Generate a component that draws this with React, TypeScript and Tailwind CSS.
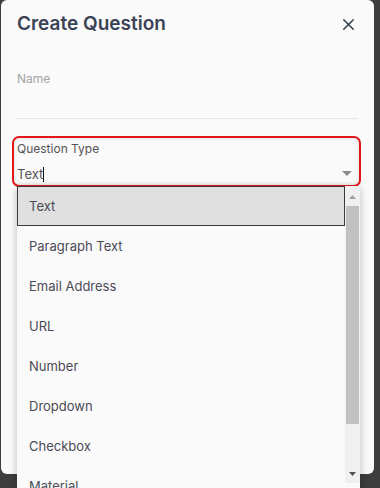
import { X } from "lucide-react"

const options = ["Text", "Paragraph Text", "Email Address", "URL", "Number", "Dropdown", "Checkbox", "Material"]

export default function App() {
  return (
    <div className="relative w-[380px] h-[488px] overflow-hidden bg-[#3d3d3d] font-['Inter','Noto_Sans',sans-serif]">
      {/* modal */}
      <div className="ml-[1px] w-[373px] h-[474px] rounded-[6px] bg-[#fafafa] px-4 pt-[11px]">
        <div className="flex items-center justify-between">
          <h2 className="text-[19px] font-semibold text-[#3a4356] leading-[26px]">Create Question</h2>
          <X className="w-[19px] h-[19px] text-[#3a4356]" strokeWidth={2} />
        </div>

        <div className="mt-[34px] border-b border-[#e6e6e6] pb-[31px]">
          <label className="block text-[12px] leading-[16px] text-[#a3a3a3]">Name</label>
        </div>

        <div className="mt-[17px] -ml-[5px] w-[349px] h-[51px] rounded-[7px] border-2 border-[#e3161b] px-[3px] pt-[3px] shadow-[inset_0_0_4px_rgba(0,0,0,0.12)]">
          <div className="text-[12px] leading-[16px] text-[#555]">Question Type</div>
          <div className="mt-[9px] flex items-center justify-between">
            <span className="text-[13px] leading-[16px] text-[#555] flex items-center">
              Text<span className="inline-block w-[1px] h-[15px] bg-[#111]" />
            </span>
            <svg width="10" height="6" viewBox="0 0 10 6" className="mr-[4px]">
              <path d="M0 0h10L5 5z" fill="#8a8a8a" />
            </svg>
          </div>
        </div>
      </div>

      {/* dropdown menu */}
      <div className="absolute left-[17px] top-[186px] w-[343px] h-[310px] bg-[#fafafa] shadow-[0_2px_8px_rgba(0,0,0,0.25)] flex">
        <ul className="flex-1">
          {options.map((o, i) => (
            <li
              key={o}
              className={
                i === 0
                  ? "h-[40px] flex items-center pl-[11px] pt-[1px] text-[13px] text-[#4a4a55] bg-[#e0e0e0] border border-[#3a3a3a]"
                  : "h-[40px] flex items-center pl-[12px] pt-[1px] text-[13px] text-[#4a4a55]"
              }
            >
              {o}
            </li>
          ))}
        </ul>
        <div className="w-[15px] h-[297px] bg-[#f0f0f0] flex flex-col items-center">
          <svg width="7" height="4" viewBox="0 0 7 4" className="mt-[9px]">
            <path d="M0 4h7L3.5 0z" fill="#a3a3a3" />
          </svg>
          <div className="mt-[7px] w-[13px] h-[218px] bg-[#c1c1c1]" />
          <div className="flex-1" />
          <svg width="7" height="4" viewBox="0 0 7 4" className="mb-[7px]">
            <path d="M0 0h7L3.5 4z" fill="#505050" />
          </svg>
        </div>
      </div>
    </div>
  )
}
